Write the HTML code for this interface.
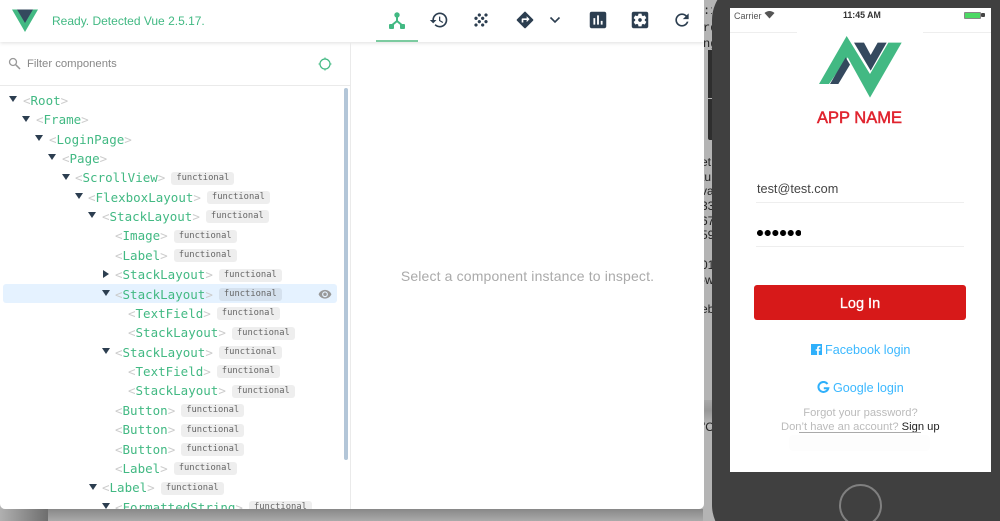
<!DOCTYPE html>
<html><head><meta charset="utf-8"><style>
html,body{margin:0;padding:0;overflow:hidden;width:1000px;height:521px}
body{position:relative;background:#b4b4b4;font-family:"Liberation Sans",sans-serif}
div,span,svg{position:absolute}
#root{left:0;top:0;width:1000px;height:521px;overflow:hidden;background:#b4b4b4}
.r{font:12.5px/16px "DejaVu Sans Mono",monospace;color:#42b983;white-space:nowrap;height:16px}
.r b{font-weight:normal;color:#ccc;position:static}
.r i{font:8.8px/13px "DejaVu Sans Mono",monospace;font-style:normal;color:#666;background:#eee;border-radius:3px;padding:0 5px;display:inline-block;height:13px;margin-left:6px;vertical-align:1px;letter-spacing:0;position:relative;top:-2px}
.a{width:0;height:0;border-left:4px solid transparent;border-right:4px solid transparent;border-top:6px solid #2c3e50}
.f{white-space:nowrap}
</style></head><body>
<div id="root">
<!-- behind -->
<div style="left:0;top:509px;width:48px;height:12px;background:linear-gradient(90deg,#b0b0b0,#6e6e6e)"></div>
<div style="left:48px;top:509px;width:660px;height:12px;background:linear-gradient(#888,#aaa)"></div>
<div style="left:703px;top:0;width:12px;height:521px;background:#b4b4b4"></div>
<div style="left:703px;top:400px;width:12px;height:27px;background:linear-gradient(#a8a8a8,#989898 40%,#bbb)"></div>
<div style="left:708px;top:50px;width:4px;height:48px;background:#2e2e2e"></div>
<div style="left:708px;top:99px;width:4px;height:41px;background:#2e2e2e;border-radius:0 0 0 2px"></div>
<div class="f" style="left:703px;top:3px;width:9px;height:60px;overflow:hidden;font:12px/16px 'Liberation Mono',monospace;color:#222"><span style="left:0;top:0">:1</span><span style="left:0;top:17px">rd</span><span style="left:0;top:33px">ng</span></div>
<div class="f" style="left:703px;top:155px;width:9px;height:340px;overflow:hidden;font:12px/14px 'Liberation Sans',sans-serif;color:#222"><span style="left:-2px;top:0">et</span><span style="left:-2px;top:15px">tu</span><span style="left:-2px;top:29px">va</span><span style="left:-2px;top:44px">33</span><span style="left:-2px;top:59px">67</span><span style="left:-2px;top:73px">59</span><span style="left:-2px;top:103px">01</span><span style="left:-2px;top:118px">-w</span><span style="left:-2px;top:147px">eb</span><span style="left:0;top:265px">'C</span><span style="left:0;top:340px">1C</span></div>
<!-- phone -->
<div style="left:712px;top:-20px;width:320px;height:565px;background:#404040;border-radius:40px"></div>
<div style="left:730px;top:8px;width:261px;height:464px;background:#fff"></div>
<div style="left:839px;top:484px;width:39px;height:39px;border:2.5px solid #808080;border-radius:50%"></div>
<div class="f" style="left:734px;top:10px;font-size:9px;line-height:12px;color:#555">Carrier</div>
<svg style="left:764px;top:10px" width="11" height="9" viewBox="0 0 11 9"><path d="M5.5 8.5 0.5 3Q5.5-1 10.5 3Z" fill="#555"/></svg>
<div class="f" style="left:843px;top:9px;font-size:8.8px;line-height:12px;color:#333;font-weight:bold">11:45 AM</div>
<div style="left:964px;top:12px;width:15px;height:5px;background:#4cd964;border:.5px solid #888;border-radius:1px"></div>
<div style="left:981px;top:13px;width:4px;height:4px;background:#444;border-radius:1px"></div>
<div style="left:730px;top:32px;width:67px;height:1px;background:#eee"></div>
<div style="left:923px;top:32px;width:68px;height:1px;background:#eee"></div>
<svg style="left:700px;top:0" width="300" height="135" viewBox="0 0 900 405"><polygon points="357,252 440,108 510,222 565,128 605,128 510,293 443,172 387,252" fill="#42b983"/><polygon points="462,128 492,128 512,165 533,128 560,128 512,212" fill="#34495e"/><polygon points="390,252 437,172 450,194 415,252" fill="#34495e"/></svg>
<div class="f" style="left:817px;top:108px;font-size:16.5px;line-height:20px;color:#e0242f;-webkit-text-stroke:.5px #e0242f">APP NAME</div>
<div class="f" style="left:757px;top:181px;font-size:12.7px;line-height:16px;color:#444">test@test.com</div>
<div style="left:756px;top:202px;width:208px;height:1px;background:#eee"></div>
<div style="left:757px;top:226px;width:44px;height:14px;background:radial-gradient(circle at 3px 7px,#000 2.8px,transparent 3.2px) 0 0/7.7px 14px repeat-x"></div>
<div style="left:756px;top:246px;width:208px;height:1px;background:#eee"></div>
<div style="left:754px;top:285px;width:212px;height:35px;background:#d71919;border-radius:3px;color:#fff;font-size:14.5px;line-height:38px;text-align:center;-webkit-text-stroke:.3px #fff">Log In</div>
<svg style="left:811px;top:344px" width="11" height="11" viewBox="0 0 11 11"><path d="M0 0H11V11H7.8V6.8H9.2L9.4 5.2H7.8V4.2C7.8 3.7 8 3.4 8.6 3.4H9.5V1.9C8 1.7 6.1 1.8 6.1 4V5.2H4.7V6.8H6.1V11H0Z" fill="#2fb0fb"/></svg>
<div class="f" style="left:825px;top:342px;font-size:12.6px;line-height:16px;color:#3bb8ff">Facebook login</div>
<svg style="left:817px;top:381px" width="13" height="13" viewBox="0 0 13 13"><path d="M10.5 3A5 5 0 1 0 11.3 7.2H6.8" fill="none" stroke="#2fb0fb" stroke-width="2"/></svg>
<div class="f" style="left:833px;top:380px;font-size:12.6px;line-height:16px;color:#3bb8ff">Google login</div>
<div style="left:730px;width:261px;top:406px;font-size:11.2px;line-height:14px;color:#bbb;text-align:center">Forgot your password?</div>
<div class="f" style="left:781px;top:420px;font-size:11.2px;line-height:14px;color:#bbb">Don’t have an account? <span style="position:static;color:#222">Sign up</span></div>
<div style="left:799px;top:432px;width:122px;height:1px;background:#aaa"></div>
<div style="left:789px;top:435px;width:141px;height:16px;background:#fdfdfd;border-radius:4px"></div>
<!-- devtools window -->
<div style="left:0;top:0;width:703.5px;height:509px;background:#fff;border-radius:0 0 5px 5px;overflow:hidden">
<div style="left:0;top:0;width:704px;height:42px;background:#fff;box-shadow:0 1px 4px rgba(0,0,0,.13)"></div>
<svg style="left:12px;top:9px" width="26" height="23" viewBox="0 0 26 23"><path d="M0 .5H26L13 23Z" fill="#42b983"/><path d="M5 .5H21L13 14Z" fill="#34495e"/></svg>
<div class="f" style="left:52px;top:14px;font-size:12px;line-height:15px;color:#42b983">Ready. Detected Vue 2.5.17.</div>
<svg style="left:387px;top:10px" width="20" height="20" viewBox="0 0 20 20"><path d="M10 5V11L4 16M10 11 16 16" fill="none" stroke="#42b983" stroke-width="2"/><circle cx="10" cy="5" r="2.7" fill="#42b983"/><rect x="2" y="14" width="5" height="5" rx="1" fill="#42b983"/><rect x="13" y="14" width="5" height="5" rx="1" fill="#42b983"/></svg>
<div style="left:376px;top:40px;width:42px;height:2px;background:#7ccba0"></div>
<svg style="left:429px;top:10px" width="20" height="20" viewBox="0 0 24 24" fill="#2c3e50"><path d="M13 3c-4.97 0-9 4.03-9 9H1l3.89 3.89.07.14L9 12H6c0-3.87 3.13-7 7-7s7 3.13 7 7-3.13 7-7 7c-1.93 0-3.68-.79-4.94-2.06l-1.42 1.42C8.27 19.99 10.51 21 13 21c4.97 0 9-4.03 9-9s-4.03-9-9-9zm-1 5v5l4.28 2.54.72-1.21-3.5-2.08V8H12z"/></svg>
<svg style="left:471px;top:10px" width="20" height="20" viewBox="0 0 24 24" fill="#2c3e50"><path d="M10 12c-1.1 0-2 .9-2 2s.9 2 2 2 2-.9 2-2-.9-2-2-2zM6 8c-1.1 0-2 .9-2 2s.9 2 2 2 2-.9 2-2-.9-2-2-2zm0 8c-1.1 0-2 .9-2 2s.9 2 2 2 2-.9 2-2-.9-2-2-2zm12-8c1.1 0 2-.9 2-2s-.9-2-2-2-2 .9-2 2 .9 2 2 2zm-4 8c-1.1 0-2 .9-2 2s.9 2 2 2 2-.9 2-2-.9-2-2-2zm4-4c-1.1 0-2 .9-2 2s.9 2 2 2 2-.9 2-2-.9-2-2-2zm-4-4c-1.1 0-2 .9-2 2s.9 2 2 2 2-.9 2-2-.9-2-2-2zm-4-4c-1.1 0-2 .9-2 2s.9 2 2 2 2-.9 2-2-.9-2-2-2z"/></svg>
<svg style="left:515px;top:10px" width="20" height="20" viewBox="0 0 24 24" fill="#2c3e50"><path d="M21.71 11.29l-9-9c-.39-.39-1.02-.39-1.41 0l-9 9c-.39.39-.39 1.02 0 1.41l9 9c.39.39 1.02.39 1.41 0l9-9c.39-.38.39-1.01 0-1.41zM14 14.5V12h-4v3H8v-4c0-.55.45-1 1-1h5V7.5l3.5 3.5-3.5 3.5z"/></svg>
<svg style="left:549px;top:16px" width="12" height="8" viewBox="0 0 12 8"><path d="M1.5 1.5 6 6 10.5 1.5" fill="none" stroke="#2c3e50" stroke-width="1.6"/></svg>
<svg style="left:587px;top:9px" width="22" height="22" viewBox="0 0 24 24" fill="#2c3e50"><path d="M19 3H5c-1.1 0-2 .9-2 2v14c0 1.1.9 2 2 2h14c1.1 0 2-.9 2-2V5c0-1.1-.9-2-2-2zM9 17H7v-7h2v7zm4 0h-2V7h2v10zm4 0h-2v-4h2v4z"/></svg>
<svg style="left:629px;top:9px" width="22" height="22" viewBox="0 0 24 24" fill="#2c3e50"><path d="M12 10c-1.1 0-2 .9-2 2s.9 2 2 2 2-.9 2-2-.9-2-2-2zm7-7H5c-1.11 0-2 .9-2 2v14c0 1.1.89 2 2 2h14c1.11 0 2-.9 2-2V5c0-1.1-.89-2-2-2zm-1.75 9c0 .23-.02.46-.05.68l1.48 1.16c.13.11.17.3.08.45l-1.4 2.42c-.09.15-.27.21-.43.15l-1.74-.7c-.36.28-.76.51-1.18.69l-.26 1.85c-.03.17-.18.3-.35.3h-2.8c-.17 0-.32-.13-.35-.29l-.26-1.85c-.43-.18-.82-.41-1.18-.69l-1.74.7c-.16.06-.34 0-.43-.15l-1.4-2.42c-.09-.15-.05-.34.08-.45l1.48-1.16c-.03-.23-.05-.46-.05-.69 0-.23.02-.46.05-.68l-1.48-1.16c-.13-.11-.17-.3-.08-.45l1.4-2.42c.09-.15.27-.21.43-.15l1.74.7c.36-.28.76-.51 1.18-.69l.26-1.85c.03-.17.18-.3.35-.3h2.8c.17 0 .32.13.35.29l.26 1.85c.43.18.82.41 1.18.69l1.74-.7c.16-.06.34 0 .43.15l1.4 2.42c.09.15.05.34-.08.45l-1.48 1.16c.03.23.05.46.05.69z"/></svg>
<svg style="left:672px;top:10px" width="20" height="20" viewBox="0 0 24 24" fill="#2c3e50"><path d="M17.65 6.35C16.2 4.9 14.21 4 12 4c-4.42 0-7.99 3.58-7.99 8s3.57 8 7.99 8c3.73 0 6.84-2.55 7.73-6h-2.08c-.82 2.33-3.04 4-5.65 4-3.31 0-6-2.69-6-6s2.69-6 6-6c1.66 0 3.14.69 4.22 1.78L13 11h7V4l-2.35 2.35z"/></svg>
<!-- filter -->
<svg style="left:8px;top:57px" width="13" height="13" viewBox="0 0 13 13"><circle cx="5" cy="5" r="3.5" fill="none" stroke="#999" stroke-width="1.3"/><path d="M7.8 7.8 12 12" stroke="#999" stroke-width="1.5"/></svg>
<div class="f" style="left:27px;top:57px;font-size:11.3px;line-height:15px;color:#888">Filter components</div>
<svg style="left:318px;top:57px" width="14" height="14" viewBox="0 0 14 14"><circle cx="7" cy="7" r="5" fill="none" stroke="#42b983" stroke-width="1.2"/><path d="M7 .5V2.5M7 11.5V13.5M.5 7H2.5M11.5 7H13.5" stroke="#42b983" stroke-width="1.1"/></svg>
<div style="left:0;top:85px;width:350px;height:1px;background:#eaeaea"></div>
<div style="left:350px;top:43px;width:1px;height:466px;background:#eaeaea"></div>
<div style="left:344px;top:88px;width:4px;height:372px;background:#b3c6d8;border-radius:2px"></div>
<div class="f" style="left:351px;width:353px;top:268px;text-align:center;font-size:14px;letter-spacing:.15px;line-height:17px;color:#aaa">Select a component instance to inspect.</div>
<!-- selected -->
<div style="left:3px;top:284px;width:334px;height:19px;background:#e5f2ff;border-radius:3px"></div>
<svg style="left:318px;top:288px" width="14" height="12" viewBox="0 0 24 20"><path d="M12 3C7 3 2.7 6.1 1 10.5 2.7 14.9 7 18 12 18s9.3-3.1 11-7.5C21.3 6.1 17 3 12 3zm0 12.5a5 5 0 1 1 0-10 5 5 0 0 1 0 10zm0-8a3 3 0 1 0 0 6 3 3 0 0 0 0-6z" fill="#999"/></svg>
<!-- arrows -->
<div class="a" style="left:9px;top:96px"></div>
<div class="a" style="left:22px;top:116px"></div>
<div class="a" style="left:35px;top:135px"></div>
<div class="a" style="left:48px;top:154px"></div>
<div class="a" style="left:62px;top:174px"></div>
<div class="a" style="left:75px;top:193px"></div>
<div class="a" style="left:88px;top:212px"></div>
<div style="left:103px;top:270px;width:0;height:0;border-top:4px solid transparent;border-bottom:4px solid transparent;border-left:6px solid #2c3e50"></div>
<div class="a" style="left:101.5px;top:290px"></div>
<div class="a" style="left:101.5px;top:348px"></div>
<div class="a" style="left:88.5px;top:484px"></div>
<div class="a" style="left:101.5px;top:503px"></div>
<!-- tree -->
<div class="r" style="left:23px;top:93px"><b>&lt;</b>Root<b>&gt;</b></div>
<div class="r" style="left:36px;top:112px"><b>&lt;</b>Frame<b>&gt;</b></div>
<div class="r" style="left:49px;top:132px"><b>&lt;</b>LoginPage<b>&gt;</b></div>
<div class="r" style="left:62px;top:151px"><b>&lt;</b>Page<b>&gt;</b></div>
<div class="r" style="left:75px;top:170px"><b>&lt;</b>ScrollView<b>&gt;</b><i style="top:-1px">functional</i></div>
<div class="r" style="left:88px;top:190px"><b>&lt;</b>FlexboxLayout<b>&gt;</b><i>functional</i></div>
<div class="r" style="left:102px;top:209px"><b>&lt;</b>StackLayout<b>&gt;</b><i>functional</i></div>
<div class="r" style="left:115px;top:228px"><b>&lt;</b>Image<b>&gt;</b><i style="top:-1px">functional</i></div>
<div class="r" style="left:115px;top:248px"><b>&lt;</b>Label<b>&gt;</b><i>functional</i></div>
<div class="r" style="left:115px;top:267px"><b>&lt;</b>StackLayout<b>&gt;</b><i style="top:-1px">functional</i></div>
<div class="r" style="left:115px;top:287px"><b>&lt;</b>StackLayout<b>&gt;</b><i style="background:#d5e1ee">functional</i></div>
<div class="r" style="left:128px;top:306px"><b>&lt;</b>TextField<b>&gt;</b><i>functional</i></div>
<div class="r" style="left:128px;top:325px"><b>&lt;</b>StackLayout<b>&gt;</b><i style="top:-1px">functional</i></div>
<div class="r" style="left:115px;top:345px"><b>&lt;</b>StackLayout<b>&gt;</b><i>functional</i></div>
<div class="r" style="left:128px;top:364px"><b>&lt;</b>TextField<b>&gt;</b><i>functional</i></div>
<div class="r" style="left:128px;top:383px"><b>&lt;</b>StackLayout<b>&gt;</b><i style="top:-1px">functional</i></div>
<div class="r" style="left:115px;top:403px"><b>&lt;</b>Button<b>&gt;</b><i>functional</i></div>
<div class="r" style="left:115px;top:422px"><b>&lt;</b>Button<b>&gt;</b><i style="top:-1px">functional</i></div>
<div class="r" style="left:115px;top:442px"><b>&lt;</b>Button<b>&gt;</b><i>functional</i></div>
<div class="r" style="left:115px;top:461px"><b>&lt;</b>Label<b>&gt;</b><i>functional</i></div>
<div class="r" style="left:102px;top:480px"><b>&lt;</b>Label<b>&gt;</b><i style="top:-1px">functional</i></div>
<div class="r" style="left:115px;top:500px"><b>&lt;</b>FormattedString<b>&gt;</b><i>functional</i></div>
</div>
</div>
</body></html>
